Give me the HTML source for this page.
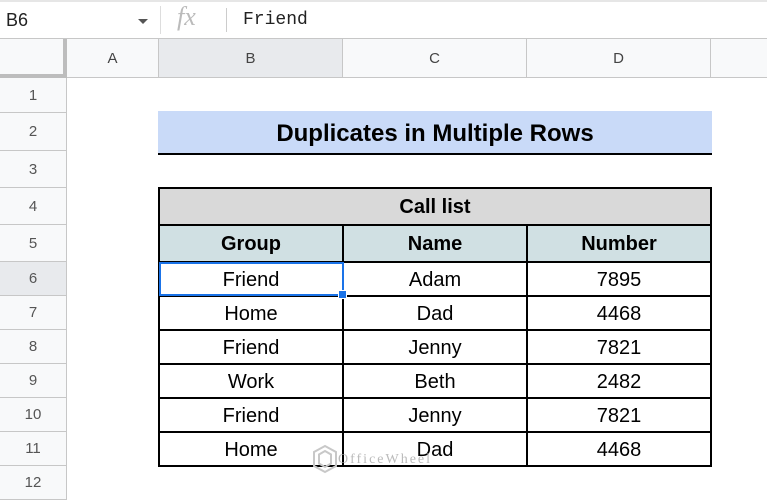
<!DOCTYPE html>
<html><head><meta charset="utf-8"><style>
*{margin:0;padding:0;box-sizing:border-box}
body{width:767px;height:502px;overflow:hidden;background:#fff;font-family:"Liberation Sans",Arial,sans-serif;position:relative}
.a{position:absolute}
.ch{position:absolute;top:39px;height:39px;background:#f8f9fa;border-right:1px solid #c7c7c7;border-bottom:1px solid #c7c7c7;font-size:15px;color:#444;text-align:center;line-height:40px}
.rh{position:absolute;left:0;width:67px;background:#f8f9fa;border-right:1px solid #c7c7c7;border-bottom:1px solid #c7c7c7;font-size:15px;color:#555;text-align:center}
.c{position:absolute;text-align:center;font-size:20px;color:#000;border-right:2px solid #000;border-bottom:2px solid #000}
</style></head><body>
<div class="a" style="left:0;top:0;width:767px;height:39px;border-bottom:1px solid #c7c7c7;border-top:2px solid #e6e6e6"></div>
<div class="a" style="left:6px;top:10px;font-size:18px;color:#222">B6</div>
<div class="a" style="left:138px;top:19px;width:0;height:0;border-left:5px solid transparent;border-right:5px solid transparent;border-top:5px solid #555"></div>
<div class="a" style="left:160px;top:6px;width:1px;height:28px;background:#ddd"></div>
<div class="a" style="left:177px;top:2px;font-family:'Liberation Serif',serif;font-style:italic;font-size:26px;color:#bbb">fx</div>
<div class="a" style="left:226px;top:8px;width:1px;height:24px;background:#ccc"></div>
<div class="a" style="left:243px;top:10px;font-family:'Liberation Mono',monospace;font-size:18px;color:#222">Friend</div>

<div class="a" style="left:0;top:39px;width:67px;height:39px;background:#f8f9fa;border-right:4px solid #bdbdbd;border-bottom:4px solid #bdbdbd"></div>
<div class="ch" style="left:67px;width:92px">A</div>
<div class="ch" style="left:159px;width:184px;background:#e8eaed">B</div>
<div class="ch" style="left:343px;width:184px">C</div>
<div class="ch" style="left:527px;width:184px">D</div>
<div class="ch" style="left:711px;width:60px"></div>

<div class="rh" style="top:78px;height:35px;line-height:35px">1</div>
<div class="rh" style="top:113px;height:38px;line-height:38px">2</div>
<div class="rh" style="top:151px;height:37px;line-height:37px">3</div>
<div class="rh" style="top:188px;height:37px;line-height:37px">4</div>
<div class="rh" style="top:225px;height:37px;line-height:37px">5</div>
<div class="rh" style="top:262px;height:34px;line-height:34px;background:#e8eaed">6</div>
<div class="rh" style="top:296px;height:34px;line-height:34px">7</div>
<div class="rh" style="top:330px;height:34px;line-height:34px">8</div>
<div class="rh" style="top:364px;height:34px;line-height:34px">9</div>
<div class="rh" style="top:398px;height:34px;line-height:34px">10</div>
<div class="rh" style="top:432px;height:34px;line-height:34px">11</div>
<div class="rh" style="top:466px;height:34px;line-height:34px">12</div>

<div class="a" style="left:158px;top:111px;width:554px;height:44px;background:#c9daf8;border-bottom:2px solid #000;text-align:center;font-weight:bold;font-size:24px;line-height:46px">Duplicates in Multiple Rows</div>

<div class="a" style="left:158px;top:187px;width:554px;height:280px;border-left:2px solid #000;border-top:2px solid #000"></div>
<div class="c" style="left:160px;top:189px;width:552px;height:37px;line-height:37px;background:#d9d9d9;font-weight:bold">Call list</div>
<div class="c" style="left:160px;top:226px;width:184px;height:37px;line-height:37px;background:#d0e0e3;font-weight:bold">Group</div>
<div class="c" style="left:344px;top:226px;width:184px;height:37px;line-height:37px;background:#d0e0e3;font-weight:bold">Name</div>
<div class="c" style="left:528px;top:226px;width:184px;height:37px;line-height:37px;background:#d0e0e3;font-weight:bold">Number</div>

<div class="c" style="left:160px;top:263px;width:184px;height:34px;line-height:34px">Friend</div>
<div class="c" style="left:344px;top:263px;width:184px;height:34px;line-height:34px">Adam</div>
<div class="c" style="left:528px;top:263px;width:184px;height:34px;line-height:34px">7895</div>
<div class="c" style="left:160px;top:297px;width:184px;height:34px;line-height:34px">Home</div>
<div class="c" style="left:344px;top:297px;width:184px;height:34px;line-height:34px">Dad</div>
<div class="c" style="left:528px;top:297px;width:184px;height:34px;line-height:34px">4468</div>
<div class="c" style="left:160px;top:331px;width:184px;height:34px;line-height:34px">Friend</div>
<div class="c" style="left:344px;top:331px;width:184px;height:34px;line-height:34px">Jenny</div>
<div class="c" style="left:528px;top:331px;width:184px;height:34px;line-height:34px">7821</div>
<div class="c" style="left:160px;top:365px;width:184px;height:34px;line-height:34px">Work</div>
<div class="c" style="left:344px;top:365px;width:184px;height:34px;line-height:34px">Beth</div>
<div class="c" style="left:528px;top:365px;width:184px;height:34px;line-height:34px">2482</div>
<div class="c" style="left:160px;top:399px;width:184px;height:34px;line-height:34px">Friend</div>
<div class="c" style="left:344px;top:399px;width:184px;height:34px;line-height:34px">Jenny</div>
<div class="c" style="left:528px;top:399px;width:184px;height:34px;line-height:34px">7821</div>
<div class="c" style="left:160px;top:433px;width:184px;height:34px;line-height:34px">Home</div>
<div class="c" style="left:344px;top:433px;width:184px;height:34px;line-height:34px">Dad</div>
<div class="c" style="left:528px;top:433px;width:184px;height:34px;line-height:34px">4468</div>

<div class="a" style="left:159px;top:262px;width:185px;height:34px;border:2px solid #1a73e8"></div>
<div class="a" style="left:338px;top:290px;width:9px;height:9px;background:#1a73e8;border:1px solid #fff"></div>

<svg class="a" style="left:312px;top:444px" width="26" height="30" viewBox="0 0 26 30"><path d="M13 2 L24 8 L24 22 L13 28 L2 22 L2 8 Z M13 7 L19 10.5 L19 19.5 L13 23 L7 19.5 L7 10.5 Z" fill="none" stroke="#c8c8c8" stroke-width="2"/></svg>
<div class="a" style="left:338px;top:452px;font-family:'Liberation Serif',serif;font-size:14px;letter-spacing:2px;color:#bbb">OfficeWheel</div>
</body></html>
